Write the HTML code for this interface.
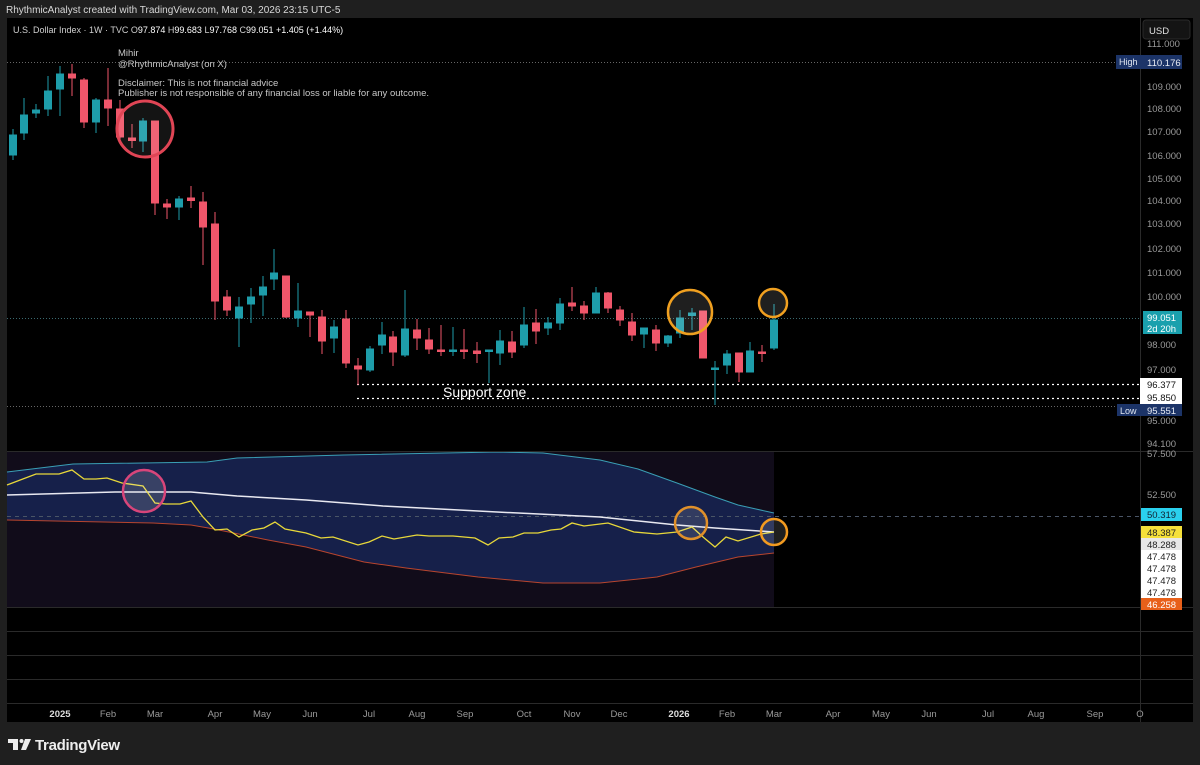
<!DOCTYPE html>
<html><head><meta charset="utf-8"><style>
html,body{margin:0;padding:0;background:#1e1e1e;}
body{width:1200px;height:765px;overflow:hidden;position:relative;font-family:"Liberation Sans",sans-serif;}
svg{position:absolute;left:0;top:0;}
</style></head><body>
<svg width="1200" height="765" xmlns="http://www.w3.org/2000/svg" font-family="Liberation Sans, sans-serif">
<rect x="0" y="0" width="1200" height="765" fill="#1f1f1f"/>
<text x="6" y="13" fill="#d8d8d8" font-size="10">RhythmicAnalyst created with TradingView.com, Mar 03, 2026 23:15 UTC-5</text>
<rect x="7" y="18" width="1186" height="704" fill="#000"/>
<line x1="1140.5" y1="18" x2="1140.5" y2="722" stroke="#2a2a2a"/>
<!-- indicator panel -->
<rect x="7" y="451" width="767" height="156" fill="#110c1a"/>
<path d="M7,472 L73,464 L207,462 L237,458 L344,455 L497,452 L543,453 L600,460 L638,469 L677,483 L715,497 L738,505 L774,513 L774,553 L738,557 L696,567 L657,577 L600,583 L543,583 L478,577 L406,568 L364,562 L306,547 L268,540 L214,529 L191,525 L153,523 L7,520 Z" fill="#16204a"/>
<path d="M7,472 L73,464 L207,462 L237,458 L344,455 L497,452 L543,453 L600,460 L638,469 L677,483 L715,497 L738,505 L774,513" fill="none" stroke="#3a9fb5" stroke-width="1"/>
<path d="M7,520 L153,523 L191,525 L214,529 L268,540 L306,547 L364,562 L406,568 L478,577 L543,583 L600,583 L657,577 L696,567 L738,557 L774,553" fill="none" stroke="#b8452e" stroke-width="1"/>
<line x1="7" y1="516.5" x2="1140" y2="516.5" stroke="#4a5566" stroke-dasharray="4,4"/>
<path d="M7,495 L115,492 L191,492 L237,496 L306,500 L383,506 L497,512 L600,517 L677,525 L715,528 L774,532" fill="none" stroke="#e8e8f0" stroke-width="1.5"/>
<path d="M7,485 L36,474 L59,474 L72,470 L84,479 L96,479 L107,478 L122,483 L143,486 L155,503 L166,504 L180,504 L191,501 L203,517 L215,530 L227,529 L239,537 L252,530 L264,528 L275,522 L285,529 L306,533 L321,538 L333,537 L358,545 L369,542 L382,536 L394,539 L417,535 L429,536 L453,536 L475,538 L488,545 L499,538 L513,537 L524,533 L538,533 L551,530 L561,529 L572,523 L584,526 L600,524 L608,523 L634,532 L657,534 L677,532 L692,527 L703,537 L715,547 L726,537 L738,541 L761,534 L774,532" fill="none" stroke="#e8d83a" stroke-width="1.3"/>
<ellipse cx="144" cy="491" rx="21" ry="21" fill="rgba(255,255,255,0.15)" stroke="#d8457a" stroke-width="2.5"/>
<circle cx="691" cy="523" r="16" fill="rgba(255,255,255,0.12)" stroke="#e0902a" stroke-width="2.5"/>
<circle cx="774" cy="532" r="13" fill="rgba(255,255,255,0.12)" stroke="#f29a20" stroke-width="2.5"/>
<g stroke="#2a2a2a"><line x1="7" y1="451.5" x2="1193" y2="451.5"/><line x1="7" y1="607.5" x2="1193" y2="607.5"/><line x1="7" y1="631.5" x2="1193" y2="631.5"/><line x1="7" y1="655.5" x2="1193" y2="655.5"/><line x1="7" y1="679.5" x2="1193" y2="679.5"/><line x1="7" y1="703.5" x2="1193" y2="703.5"/></g>
<!-- price lines -->
<line x1="7" y1="62.5" x2="1118" y2="62.5" stroke="#666" stroke-dasharray="1,2"/>
<line x1="7" y1="318.5" x2="1140" y2="318.5" stroke="#3a6a70" stroke-dasharray="1,2"/>
<line x1="7" y1="406.5" x2="1118" y2="406.5" stroke="#666" stroke-dasharray="1,2"/>
<line x1="357" y1="384.5" x2="1140" y2="384.5" stroke="#fff" stroke-dasharray="2,3" stroke-width="1.2"/>
<line x1="357" y1="398.5" x2="1140" y2="398.5" stroke="#fff" stroke-dasharray="2,3" stroke-width="1.2"/>
<text x="443" y="397" fill="#fff" font-size="14">Support zone</text>
<!-- candles -->
<g id="c">
<g stroke="#1e9daa" fill="#1e9daa">
<line x1="13" y1="129" x2="13" y2="160"/><rect x="9.5" y="135" width="7" height="20"/>
<line x1="24" y1="98" x2="24" y2="140"/><rect x="20.5" y="115" width="7" height="18"/>
<line x1="36" y1="104" x2="36" y2="118"/><rect x="32.5" y="110" width="7" height="3"/>
<line x1="48" y1="76" x2="48" y2="116"/><rect x="44.5" y="91" width="7" height="18"/>
<line x1="60" y1="66" x2="60" y2="116"/><rect x="56.5" y="74" width="7" height="15"/>
<line x1="96" y1="98" x2="96" y2="133"/><rect x="92.5" y="100" width="7" height="22"/>
<line x1="143" y1="118" x2="143" y2="152"/><rect x="139.5" y="121" width="7" height="20"/>
<line x1="179" y1="196" x2="179" y2="220"/><rect x="175.5" y="199" width="7" height="8"/>
<line x1="239" y1="297" x2="239" y2="347"/><rect x="235.5" y="307" width="7" height="11"/>
<line x1="251" y1="288" x2="251" y2="323"/><rect x="247.5" y="297" width="7" height="7"/>
<line x1="263" y1="276" x2="263" y2="316"/><rect x="259.5" y="287" width="7" height="8"/>
<line x1="274" y1="249" x2="274" y2="290"/><rect x="270.5" y="273" width="7" height="6"/>
<line x1="298" y1="283" x2="298" y2="327"/><rect x="294.5" y="311" width="7" height="7"/>
<line x1="334" y1="320" x2="334" y2="353"/><rect x="330.5" y="327" width="7" height="11"/>
<line x1="370" y1="346" x2="370" y2="372"/><rect x="366.5" y="349" width="7" height="21"/>
<line x1="382" y1="322" x2="382" y2="354"/><rect x="378.5" y="335" width="7" height="10"/>
<line x1="405" y1="290" x2="405" y2="357"/><rect x="401.5" y="329" width="7" height="26"/>
<line x1="453" y1="327" x2="453" y2="356"/><rect x="449.5" y="350" width="7" height="1.5"/>
<line x1="489" y1="350" x2="489" y2="383"/><rect x="485.5" y="350" width="7" height="1.5"/>
<line x1="500" y1="330" x2="500" y2="365"/><rect x="496.5" y="341" width="7" height="12"/>
<line x1="524" y1="307" x2="524" y2="348"/><rect x="520.5" y="325" width="7" height="20"/>
<line x1="548" y1="317" x2="548" y2="335"/><rect x="544.5" y="323" width="7" height="5"/>
<line x1="560" y1="298" x2="560" y2="330"/><rect x="556.5" y="304" width="7" height="19"/>
<line x1="596" y1="287" x2="596" y2="313"/><rect x="592.5" y="293" width="7" height="20"/>
<line x1="644" y1="328" x2="644" y2="348"/><rect x="640.5" y="328" width="7" height="6"/>
<line x1="668" y1="335" x2="668" y2="347"/><rect x="664.5" y="336" width="7" height="7"/>
<line x1="680" y1="310" x2="680" y2="338"/><rect x="676.5" y="318" width="7" height="15"/>
<line x1="692" y1="308" x2="692" y2="330"/><rect x="688.5" y="313" width="7" height="2.5"/>
<line x1="715" y1="361" x2="715" y2="405"/><rect x="711.5" y="368" width="7" height="1.5"/>
<line x1="727" y1="350" x2="727" y2="374"/><rect x="723.5" y="354" width="7" height="11"/>
<line x1="750" y1="342" x2="750" y2="372"/><rect x="746.5" y="351" width="7" height="21"/>
<line x1="774" y1="304" x2="774" y2="350"/><rect x="770.5" y="320" width="7" height="28"/>
</g>
<g stroke="#f0566a" fill="#f0566a">
<line x1="72" y1="64" x2="72" y2="96"/><rect x="68.5" y="74" width="7" height="4"/>
<line x1="84" y1="78" x2="84" y2="128"/><rect x="80.5" y="80" width="7" height="42"/>
<line x1="108" y1="68" x2="108" y2="126"/><rect x="104.5" y="100" width="7" height="8"/>
<line x1="120" y1="100" x2="120" y2="142"/><rect x="116.5" y="109" width="7" height="28"/>
<line x1="132" y1="124" x2="132" y2="148"/><rect x="128.5" y="138" width="7" height="2.5"/>
<line x1="155" y1="121" x2="155" y2="215"/><rect x="151.5" y="121" width="7" height="82"/>
<line x1="167" y1="199" x2="167" y2="219"/><rect x="163.5" y="204" width="7" height="3"/>
<line x1="191" y1="186" x2="191" y2="208"/><rect x="187.5" y="198" width="7" height="2.5"/>
<line x1="203" y1="192" x2="203" y2="265"/><rect x="199.5" y="202" width="7" height="25"/>
<line x1="215" y1="212" x2="215" y2="320"/><rect x="211.5" y="224" width="7" height="77"/>
<line x1="227" y1="290" x2="227" y2="316"/><rect x="223.5" y="297" width="7" height="13"/>
<line x1="286" y1="276" x2="286" y2="318"/><rect x="282.5" y="276" width="7" height="41"/>
<line x1="310" y1="312" x2="310" y2="337"/><rect x="306.5" y="312" width="7" height="3"/>
<line x1="322" y1="310" x2="322" y2="354"/><rect x="318.5" y="317" width="7" height="24"/>
<line x1="346" y1="310" x2="346" y2="368"/><rect x="342.5" y="319" width="7" height="44"/>
<line x1="358" y1="358" x2="358" y2="385"/><rect x="354.5" y="366" width="7" height="3"/>
<line x1="393" y1="331" x2="393" y2="366"/><rect x="389.5" y="337" width="7" height="15"/>
<line x1="417" y1="319" x2="417" y2="350"/><rect x="413.5" y="330" width="7" height="8"/>
<line x1="429" y1="328" x2="429" y2="354"/><rect x="425.5" y="340" width="7" height="9"/>
<line x1="441" y1="325" x2="441" y2="356"/><rect x="437.5" y="350" width="7" height="1.5"/>
<line x1="464" y1="329" x2="464" y2="359"/><rect x="460.5" y="350" width="7" height="1.5"/>
<line x1="477" y1="342" x2="477" y2="363"/><rect x="473.5" y="351" width="7" height="2.5"/>
<line x1="512" y1="331" x2="512" y2="358"/><rect x="508.5" y="342" width="7" height="10"/>
<line x1="536" y1="309" x2="536" y2="344"/><rect x="532.5" y="323" width="7" height="8"/>
<line x1="572" y1="287" x2="572" y2="311"/><rect x="568.5" y="303" width="7" height="3"/>
<line x1="584" y1="301" x2="584" y2="320"/><rect x="580.5" y="306" width="7" height="7"/>
<line x1="608" y1="292" x2="608" y2="313"/><rect x="604.5" y="293" width="7" height="15"/>
<line x1="620" y1="306" x2="620" y2="326"/><rect x="616.5" y="310" width="7" height="10"/>
<line x1="632" y1="313" x2="632" y2="341"/><rect x="628.5" y="322" width="7" height="13"/>
<line x1="656" y1="325" x2="656" y2="351"/><rect x="652.5" y="330" width="7" height="13"/>
<line x1="703" y1="311" x2="703" y2="358"/><rect x="699.5" y="311" width="7" height="47"/>
<line x1="739" y1="353" x2="739" y2="382"/><rect x="735.5" y="353" width="7" height="19"/>
<line x1="762" y1="345" x2="762" y2="362"/><rect x="758.5" y="352" width="7" height="1.5"/>
</g>
</g>
<circle cx="145" cy="129" r="28" fill="rgba(255,255,255,0.08)" stroke="#e04555" stroke-width="3"/>
<circle cx="690" cy="312" r="22" fill="rgba(255,255,255,0.12)" stroke="#f0a020" stroke-width="2.5"/>
<circle cx="773" cy="303" r="14" fill="rgba(255,255,255,0.12)" stroke="#f0a020" stroke-width="2.5"/>
<!-- header text -->
<text x="13" y="33" fill="#cfcfcf" font-size="9">U.S. Dollar Index · 1W · TVC  O<tspan fill="#fff">97.874</tspan>  H<tspan fill="#fff">99.683</tspan>  L<tspan fill="#fff">97.768</tspan>  C<tspan fill="#fff">99.051</tspan>  <tspan fill="#fff">+1.405 (+1.44%)</tspan></text>
<g fill="#c8c8c8" font-size="9.5">
<text x="118" y="56">Mihir</text>
<text x="118" y="67">@RhythmicAnalyst (on X)</text>
<text x="118" y="86">Disclaimer: This is not financial advice</text>
<text x="118" y="96">Publisher is not responsible of any financial loss or liable for any outcome.</text>
</g>
<!-- right axis -->
<rect x="1143" y="20" width="47" height="19" rx="3" fill="#141414" stroke="#2a2a2a"/>
<text x="1149" y="34" fill="#e0e0e0" font-size="9.5">USD</text>
<g fill="#9a9a9a" font-size="9.5">
<text x="1147" y="47">111.000</text>
<text x="1147" y="90">109.000</text>
<text x="1147" y="112">108.000</text>
<text x="1147" y="135">107.000</text>
<text x="1147" y="159">106.000</text>
<text x="1147" y="182">105.000</text>
<text x="1147" y="204">104.000</text>
<text x="1147" y="227">103.000</text>
<text x="1147" y="252">102.000</text>
<text x="1147" y="276">101.000</text>
<text x="1147" y="300">100.000</text>
<text x="1147" y="348">98.000</text>
<text x="1147" y="373">97.000</text>
<text x="1147" y="424">95.000</text>
<text x="1147" y="447">94.100</text>
<text x="1147" y="457">57.500</text>
<text x="1147" y="498">52.500</text>
</g>
<rect x="1116" y="55" width="66" height="14" fill="#1c3468"/>
<text x="1119" y="65" fill="#e0e6f0" font-size="9">High</text><text x="1147" y="66" fill="#e8ecf4" font-size="9.5">110.176</text>
<rect x="1143" y="311" width="39" height="23" fill="#1aa0ad"/>
<text x="1147" y="321" fill="#fff" font-size="9.5">99.051</text><text x="1147" y="332" fill="#fff" font-size="9.5">2d 20h</text>
<rect x="1140" y="378" width="42" height="13" fill="#fff"/><text x="1147" y="388" fill="#111" font-size="9.5">96.377</text>
<rect x="1140" y="391" width="42" height="13" fill="#fff"/><text x="1147" y="401" fill="#111" font-size="9.5">95.850</text>
<rect x="1117" y="404" width="65" height="12" fill="#1c3468"/>
<text x="1120" y="414" fill="#e0e6f0" font-size="9">Low</text><text x="1147" y="414" fill="#e8ecf4" font-size="9.5">95.551</text>
<rect x="1141" y="508" width="41" height="13" fill="#2ad0ee"/><text x="1147" y="518" fill="#123" font-size="9.5">50.319</text>
<rect x="1141" y="526" width="41" height="12" fill="#f5e03a"/><text x="1147" y="536" fill="#222" font-size="9.5">48.387</text>
<rect x="1141" y="538" width="41" height="12" fill="#e8e8e8"/><text x="1147" y="548" fill="#222" font-size="9.5">48.288</text>
<rect x="1141" y="550" width="41" height="48" fill="#fff"/>
<g fill="#222" font-size="9.5"><text x="1147" y="560">47.478</text><text x="1147" y="572">47.478</text><text x="1147" y="584">47.478</text><text x="1147" y="596">47.478</text></g>
<rect x="1141" y="598" width="41" height="12" fill="#e8601a"/><text x="1147" y="608" fill="#fff" font-size="9.5">46.258</text>
<!-- time axis -->
<g fill="#9a9a9a" font-size="9.5" text-anchor="middle">
<text x="60" y="717" fill="#ddd" font-weight="bold">2025</text>
<text x="108" y="717">Feb</text><text x="155" y="717">Mar</text><text x="215" y="717">Apr</text>
<text x="262" y="717">May</text><text x="310" y="717">Jun</text><text x="369" y="717">Jul</text>
<text x="417" y="717">Aug</text><text x="465" y="717">Sep</text><text x="524" y="717">Oct</text>
<text x="572" y="717">Nov</text><text x="619" y="717">Dec</text>
<text x="679" y="717" fill="#ddd" font-weight="bold">2026</text>
<text x="727" y="717">Feb</text><text x="774" y="717">Mar</text><text x="833" y="717">Apr</text>
<text x="881" y="717">May</text><text x="929" y="717">Jun</text><text x="988" y="717">Jul</text>
<text x="1036" y="717">Aug</text><text x="1095" y="717">Sep</text><text x="1140" y="717">O</text>
</g>
<!-- logo -->
<g fill="#eee">
<path d="M8,739 H18 V750 H13 V743 H8 Z"/>
<circle cx="21.5" cy="741" r="2"/>
<path d="M25,739 H31 L26,750 H21 Z"/>
</g>
<text x="35" y="750" fill="#eee" font-size="15" font-weight="bold" letter-spacing="-0.3">TradingView</text>
</svg>
</body></html>
